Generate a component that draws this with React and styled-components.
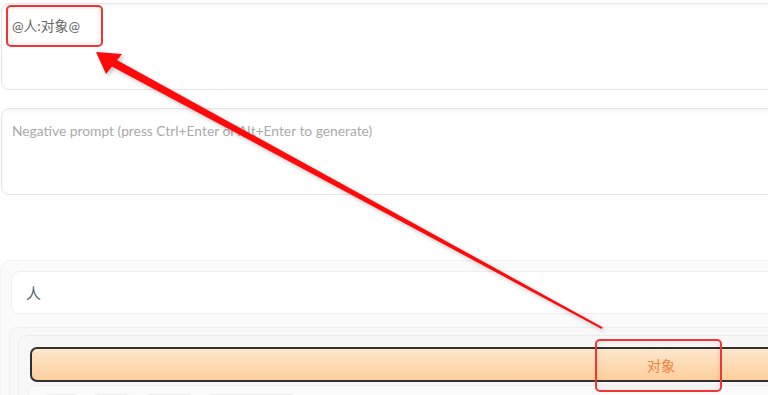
import styled, { createGlobalStyle } from "styled-components";

const GlobalStyle = createGlobalStyle`
  html, body {
    margin: 0;
    padding: 0;
    background: #ffffff;
    overflow: hidden;
  }
  body {
    font-family: Lato, "Noto Sans CJK SC", sans-serif;
    width: 768px;
    height: 395px;
  }
`;

const Page = styled.div`
  position: relative;
  width: 768px;
  height: 395px;
  overflow: hidden;
`;

const Content = styled.div`
  width: 1322px;
  padding-top: 3px;
  display: flex;
  flex-direction: column;
`;

const PromptBox = styled.div`
  box-sizing: border-box;
  height: 87px;
  margin: 0 0 0 1px;
  padding: 12px 10px;
  border: 1px solid #e6e6e6;
  border-radius: 8px;
  background: #ffffff;
  box-shadow: inset 0 2px 4px rgba(0, 0, 0, 0.04);
  font-size: 13.8px;
  line-height: 20px;
  color: ${(p) => (p.$placeholder ? "#aaaaaa" : "#666666")};
  & + & {
    margin-top: 18px;
  }
`;

const Panel = styled.div`
  box-sizing: border-box;
  margin-top: 65px;
  padding: 10px 8px 0;
  background: #fafafa;
  border: 1px solid #f3f3f3;
  border-radius: 10px;
  display: flex;
  flex-direction: column;
`;

const TagInput = styled.div`
  box-sizing: border-box;
  height: 43px;
  margin: 0 2px;
  padding: 0 14px;
  display: flex;
  align-items: center;
  background: #ffffff;
  border: 1px solid #eeeeee;
  border-radius: 8px;
  font-size: 15px;
  color: #5f6470;
`;

const Block = styled.div`
  box-sizing: border-box;
  margin-top: 13px;
  padding: 7px 8px 0;
  background: #f8f8f8;
  border: 1px solid #eeeeee;
  border-radius: 9px;
`;

const Inner = styled.div`
  box-sizing: border-box;
  padding: 11px 11px 0;
  background: #f7f7f7;
  border: 1px solid #ececec;
  border-radius: 9px;
`;

const TagBar = styled.div`
  box-sizing: border-box;
  height: 35px;
  display: flex;
  align-items: center;
  justify-content: center;
  border: 2px solid #303030;
  border-radius: 7px;
  background: linear-gradient(180deg, #ffe7cc 0%, #fdcf9c 100%);
  font-size: 14px;
  color: #f0803e;
`;

const ChipRow = styled.div`
  box-sizing: border-box;
  margin: 3px -2px 0;
  padding: 8px 15px 0;
  height: 30px;
  display: flex;
  gap: 14px;
  background: #fafafa;
  border: 1px solid #efefef;
  border-radius: 8px;
`;

const Chip = styled.div`
  box-sizing: border-box;
  width: ${(p) => p.$w}px;
  height: 20px;
  background: #ffffff;
  border: 1px solid #ececec;
  border-radius: 5px;
`;

const Highlight = styled.div`
  position: absolute;
  box-sizing: border-box;
  left: ${(p) => p.$x}px;
  top: ${(p) => p.$y}px;
  width: ${(p) => p.$w}px;
  height: ${(p) => p.$h}px;
  border: 2px solid #ee3636;
  border-radius: 5px;
  box-shadow: inset 0 0 6px rgba(90, 40, 20, 0.12);
  pointer-events: none;
`;

const Overlay = styled.svg`
  position: absolute;
  left: 0;
  top: 0;
  pointer-events: none;
  filter: drop-shadow(2px 2px 2px rgba(0, 0, 0, 0.25));
`;

const chips = [35, 38, 48, 89];

export default function App() {
  return (
    <Page>
      <GlobalStyle />
      <Content>
        <PromptBox>@人:对象@</PromptBox>
        <PromptBox $placeholder>
          Negative prompt (press Ctrl+Enter or Alt+Enter to generate)
        </PromptBox>
        <Panel>
          <TagInput>人</TagInput>
          <Block>
            <Inner>
              <TagBar>对象</TagBar>
              <ChipRow>
                {chips.map((w, i) => (
                  <Chip key={i} $w={w} />
                ))}
              </ChipRow>
            </Inner>
          </Block>
        </Panel>
      </Content>

      <Highlight $x={6} $y={5} $w={97} $h={42} />
      <Highlight $x={595} $y={339} $w={127} $h={53} />

      <Overlay width="768" height="395" viewBox="0 0 768 395">
        <polygon
          fill="#ff0a0a"
          points="114,58.6 602.6,327.2 601.6,328.9 110,65.4"
        />
        <polygon fill="#ff0a0a" points="96,52 122,54 106,74" />
      </Overlay>
    </Page>
  );
}
